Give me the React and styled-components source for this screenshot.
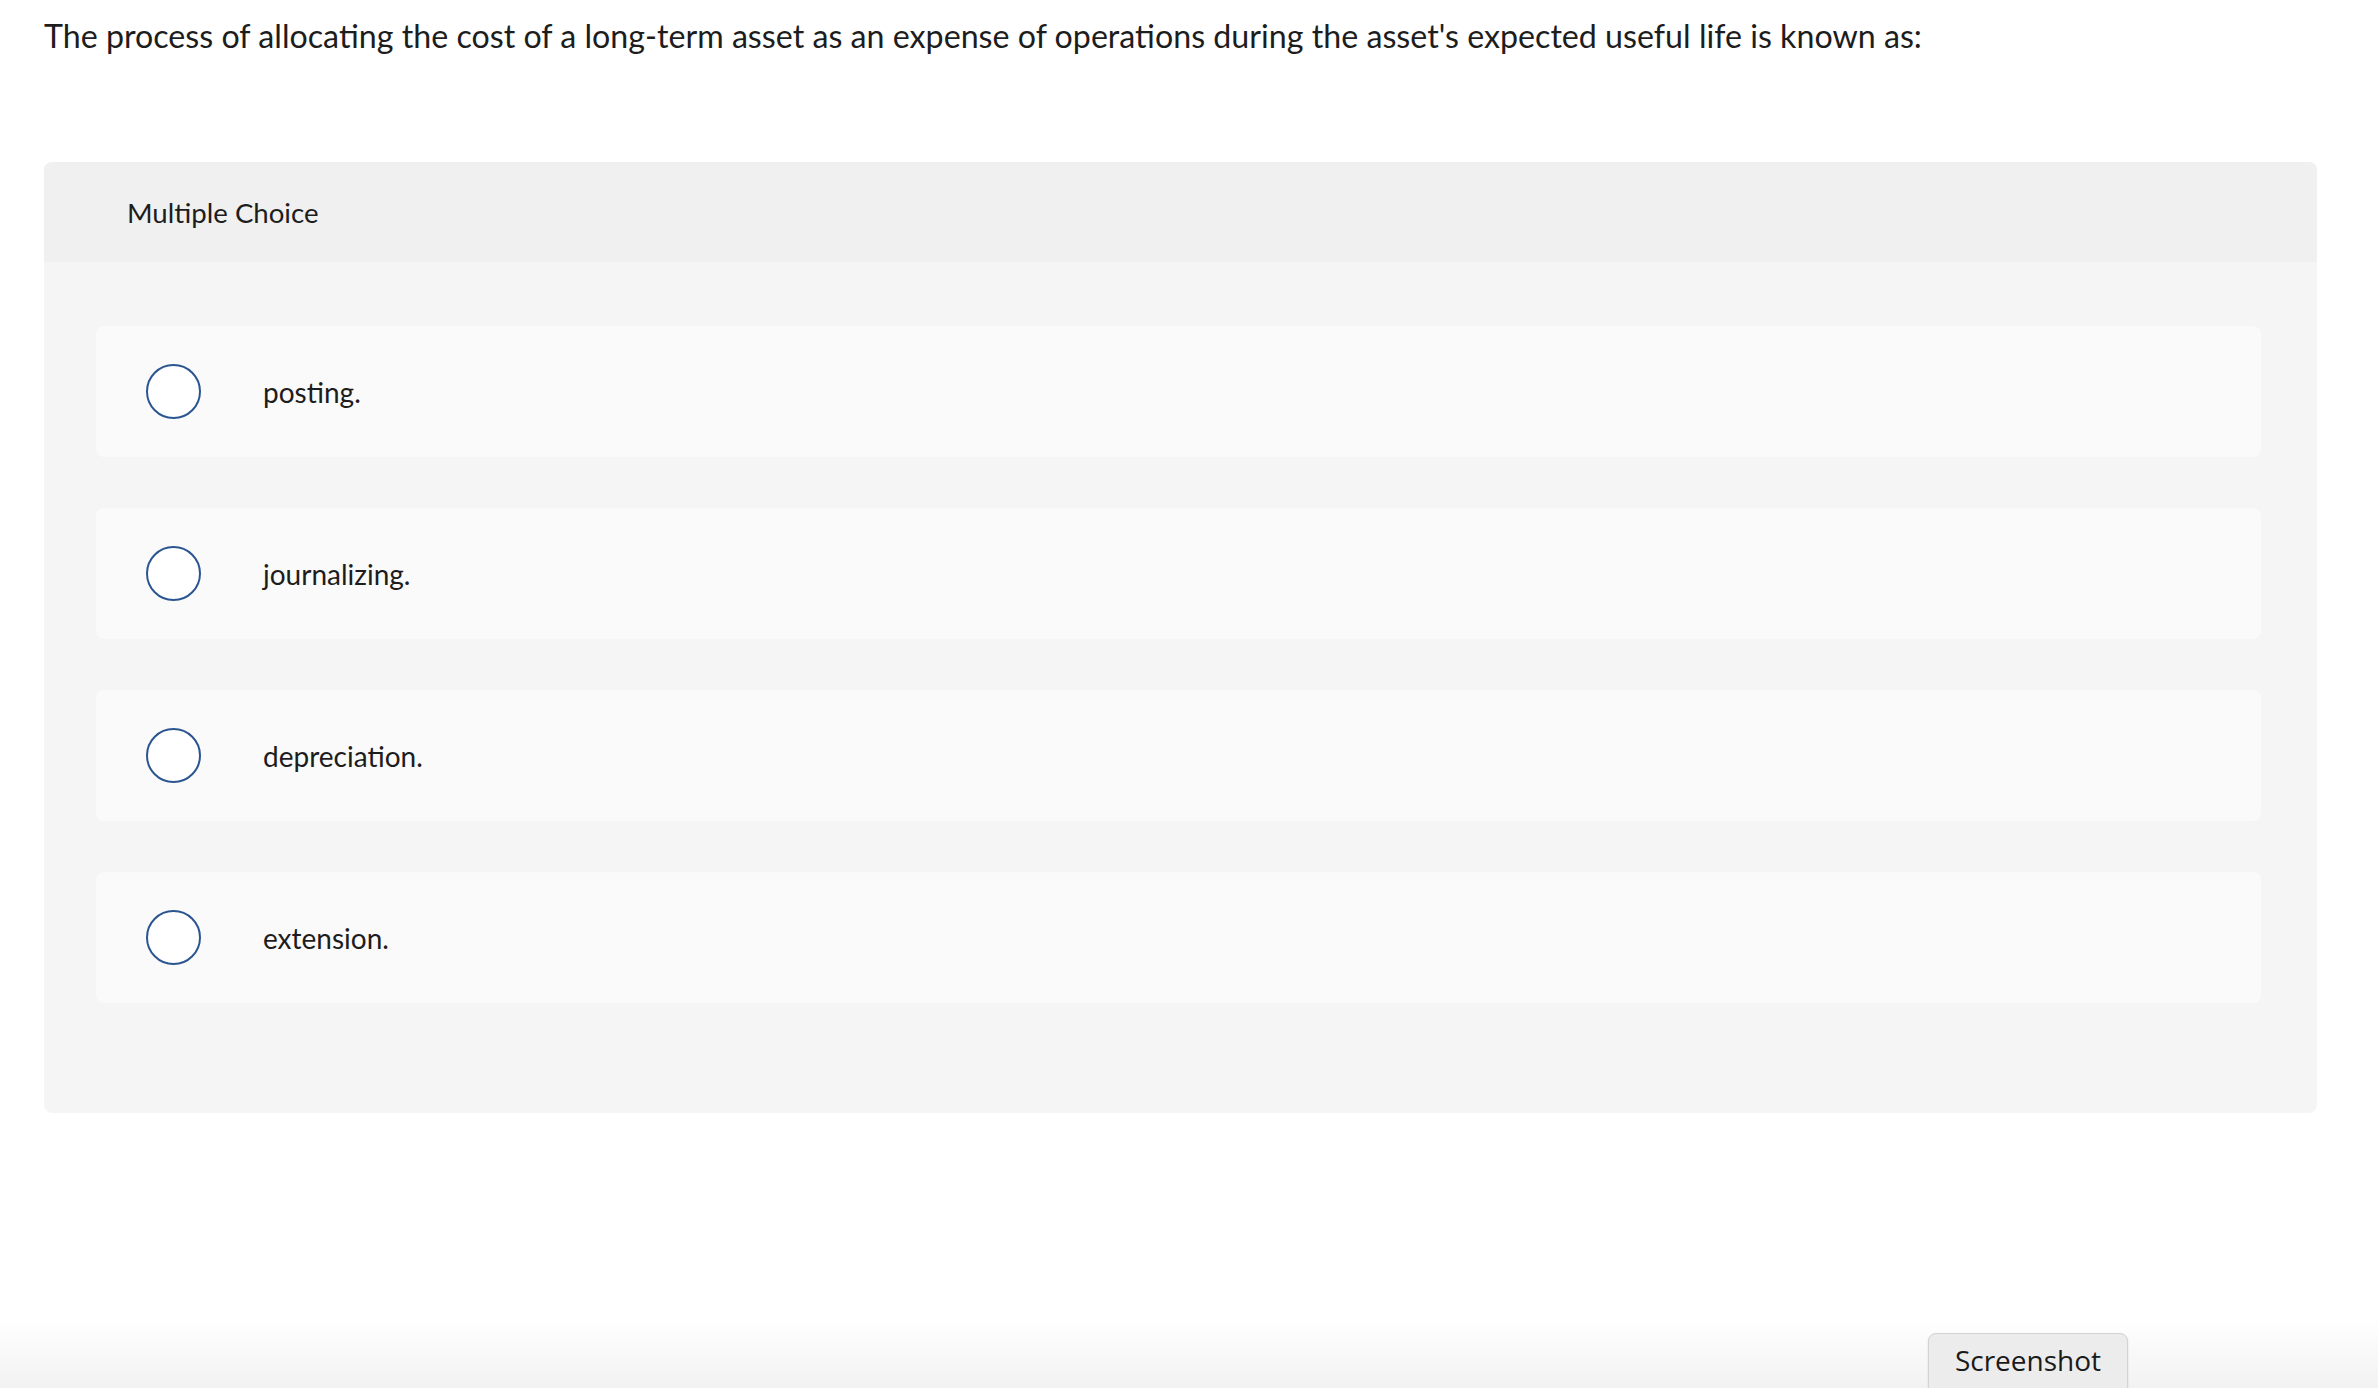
import React from 'react';
import styled, {createGlobalStyle} from "styled-components";

const GlobalStyle = createGlobalStyle`
  html, body {
    margin: 0;
    padding: 0;
    background: #ffffff;
    font-family: Lato, "Open Sans", "Liberation Sans", sans-serif;
    color: #1d1d1d;
  }
`

const Page = styled.div`
  position: relative;
  height: 100vh;
  overflow: hidden;
  padding: 16px 61px 0 44px;
  box-sizing: border-box;
`

const Question = styled.p`
  margin: 0;
  font-size: 32.2px;
  line-height: 40px;
  color: #1d1d1d;
`

const Card = styled.section`
  margin-top: 106px;
  border-radius: 8px;
  background: #f5f5f5;
  overflow: hidden;
`

const CardHeader = styled.header`
  height: 100px;
  display: flex;
  align-items: center;
  padding-left: 83px;
  background: #f0f0f0;
  font-size: 27.6px;
  color: #1d1d1d;
`

const OptionList = styled.div`
  display: flex;
  flex-direction: column;
  gap: 51px;
  padding: 64px 56px 110px 52px;
`

const Option = styled.label`
  height: 131px;
  display: flex;
  align-items: center;
  padding-left: 50px;
  background: #fafafa;
  border-radius: 8px;
  cursor: pointer;
`

const Radio = styled.span`
  width: 55px;
  height: 55px;
  box-sizing: border-box;
  border: 2px solid #2b5591;
  border-radius: 50%;
  background: #ffffff;
  flex-shrink: 0;
`

const OptionText = styled.span`
  margin-left: 62px;
  font-size: 28px;
  color: #1d1d1d;
`

const BottomBar = styled.div`
  position: absolute;
  left: 0;
  right: 0;
  bottom: 0;
  height: 70px;
  background: linear-gradient(to bottom, rgba(255, 255, 255, 0), #f2f2f2);
  display: flex;
  justify-content: flex-end;
  align-items: flex-start;
  padding-right: 250px;
`

const ScreenshotButton = styled.button`
  margin-top: 15px;
  width: 200px;
  height: 62px;
  border: 1px solid #d3d3d3;
  border-radius: 8px;
  background: #ececec;
  box-shadow: 0 1px 2px rgba(0, 0, 0, 0.12);
  font-family: "Open Sans", "Liberation Sans", sans-serif;
  font-size: 28px;
  color: #1a1a1a;
  display: flex;
  justify-content: center;
  padding-top: 7px;
  box-sizing: border-box;
`

const options = ["posting.", "journalizing.", "depreciation.", "extension."];

function App() {
    return (
        <Page>
            <GlobalStyle/>
            <Question>
                The process of allocating the cost of a long-term asset as an expense of operations during the asset's expected useful life is known as:
            </Question>
            <Card>
                <CardHeader>Multiple Choice</CardHeader>
                <OptionList>
                    {options.map(option => (
                        <Option key={option}>
                            <Radio/>
                            <OptionText>{option}</OptionText>
                        </Option>
                    ))}
                </OptionList>
            </Card>
            <BottomBar>
                <ScreenshotButton>Screenshot</ScreenshotButton>
            </BottomBar>
        </Page>
    )
}

export default App;
